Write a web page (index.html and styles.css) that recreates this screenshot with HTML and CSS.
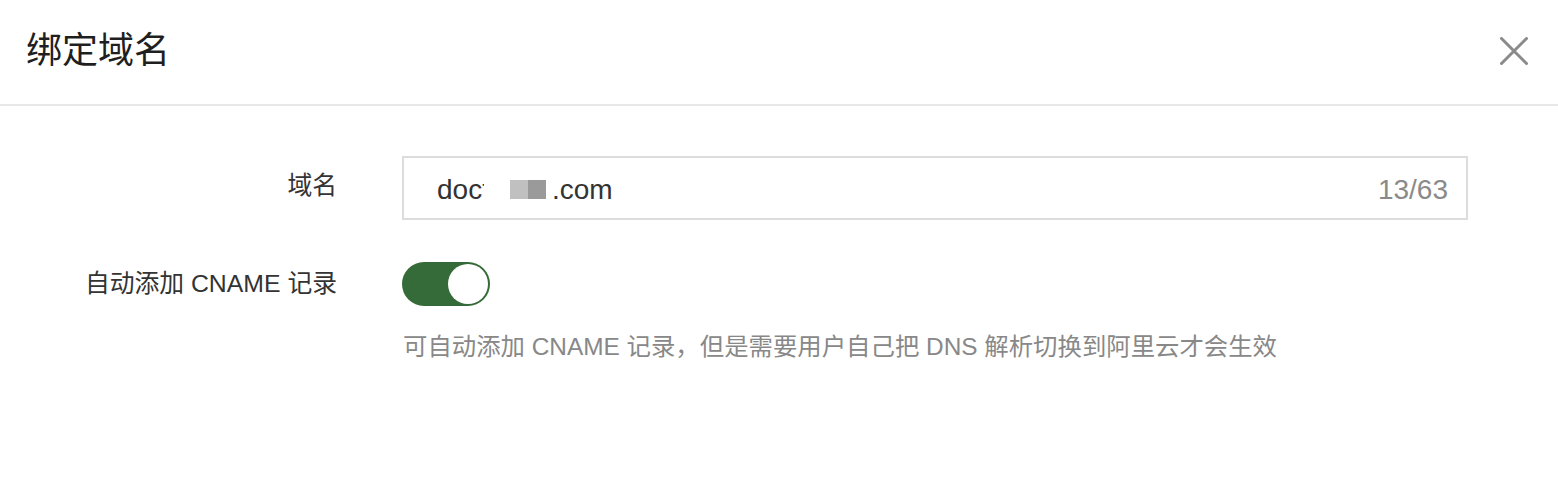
FILE: index.html
```html
<!DOCTYPE html>
<html lang="zh-CN">
<head>
<meta charset="utf-8">
<title>绑定域名</title>
<link rel="stylesheet" href="styles.css">
</head>
<body>
<div class="dialog">
  <header class="dialog-header">
    <h1 class="dialog-title">绑定域名</h1>
    <button class="close-btn" aria-label="关闭">
      <svg width="28" height="28" viewBox="0 0 28 28"><path d="M1.5 1.5 L26.5 26.5 M26.5 1.5 L1.5 26.5" stroke="#8a8a8a" stroke-width="3" stroke-linecap="round" fill="none"/></svg>
    </button>
  </header>
  <form class="dialog-body">
    <div class="form-row row-domain">
      <label class="form-label">域名</label>
      <div class="input-box">
        <span class="input-value">doct<span class="mosaic"><i class="m-white"></i><i class="m-light"></i><i class="m-dark"></i><i class="m-gap"></i></span>.com</span>
        <span class="counter">13/63</span>
      </div>
    </div>
    <div class="form-row row-switch">
      <label class="form-label">自动添加 CNAME 记录</label>
      <div class="switch-col">
        <span class="switch"><span class="knob"></span></span>
        <p class="help">可自动添加 CNAME 记录，但是需要用户自己把 DNS 解析切换到阿里云才会生效</p>
      </div>
    </div>
  </form>
</div>
</body>
</html>
```
FILE: styles.css
```css
* { box-sizing: border-box; }
html, body { margin: 0; padding: 0; background: #fff; }
body {
  font-family: "Liberation Sans", "Noto Sans CJK SC", sans-serif;
  color: #333;
}
.dialog { width: 1558px; }
.dialog-header {
  height: 106px;
  border-bottom: 2px solid #e8e8e8;
  display: flex;
  align-items: center;
  justify-content: space-between;
  padding: 0 30px 2px 26px;
}
.dialog-title {
  margin: 0;
  font-size: 36px;
  font-weight: 400;
  color: #1f1f1f;
  line-height: 40px;
}
.close-btn {
  border: 0;
  background: none;
  padding: 0;
  width: 28px;
  height: 28px;
  display: flex;
  cursor: pointer;
}
.dialog-body {
  padding-top: 50px;
  display: flex;
  flex-direction: column;
  gap: 42px;
}
.form-row {
  display: grid;
  grid-template-columns: 337px 1066px;
  column-gap: 65px;
}
.form-label {
  font-size: 24.8px;
  color: #333;
  text-align: right;
}
.row-domain .form-label { line-height: 60px; }
.row-switch .form-label { line-height: 44px; }
.input-box {
  height: 64px;
  border: 2px solid #dcdcdc;
  display: flex;
  align-items: center;
  justify-content: space-between;
  padding: 0 18px 0 33px;
  font-size: 28px;
}
.input-value {
  color: #333;
  display: inline-flex;
  align-items: center;
  padding-top: 3px;
}
.mosaic {
  display: inline-flex;
  margin-left: -6px;
  height: 22px;
  position: relative;
}
.mosaic i { display: block; height: 22px; }
.m-white { width: 26px; background: #fff; }
.m-light { width: 18px; background: #c0c0c0; height: 19px !important; margin-top: 1px; }
.m-dark { width: 18px; background: #9a9a9a; height: 19px !important; margin-top: 1px; }
.m-gap { width: 6px; background: #fff; }
.counter { color: #8a8a8a; padding-top: 3px; }
.switch-col { display: flex; flex-direction: column; align-items: flex-start; }
.switch {
  width: 88px;
  height: 44px;
  border-radius: 22px;
  background: #346b38;
  display: flex;
  justify-content: flex-end;
  align-items: center;
  padding: 2px;
}
.knob {
  width: 40px;
  height: 40px;
  border-radius: 50%;
  background: #fff;
}
.help {
  margin: 25px 0 0 1px;
  font-size: 24.4px;
  line-height: 32px;
  color: #888;
}
```
